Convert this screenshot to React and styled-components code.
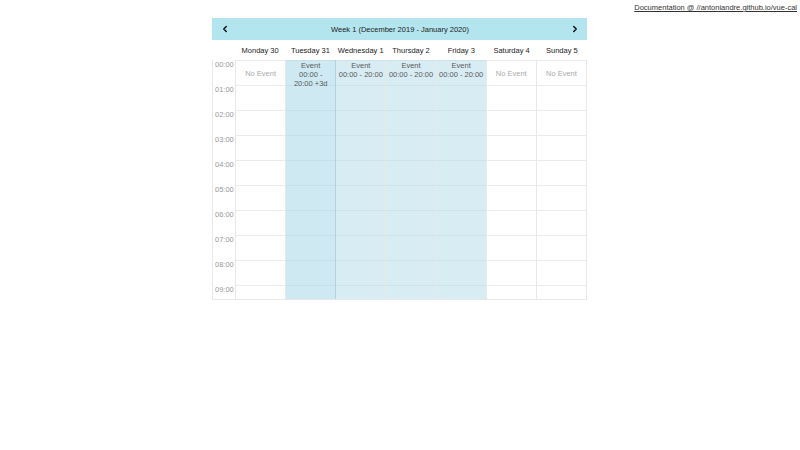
import React from "react";
import styled, { createGlobalStyle } from "styled-components";
import { ChevronLeft, ChevronRight } from "lucide-react";

const GlobalStyle = createGlobalStyle`
  html, body {
    margin: 0;
    padding: 0;
    background: #fff;
    font-family: "Liberation Sans", Arial, sans-serif;
  }
`;

const days = [
  { label: "Monday 30", event: null },
  { label: "Tuesday 31", event: { title: "Event", lines: ["00:00 -", "20:00 +3d"], strong: true } },
  { label: "Wednesday 1", event: { title: "Event", lines: ["00:00 - 20:00"] } },
  { label: "Thursday 2", event: { title: "Event", lines: ["00:00 - 20:00"] } },
  { label: "Friday 3", event: { title: "Event", lines: ["00:00 - 20:00"] } },
  { label: "Saturday 4", event: null },
  { label: "Sunday 5", event: null },
];

const hours = ["00:00", "01:00", "02:00", "03:00", "04:00", "05:00", "06:00", "07:00", "08:00", "09:00"];

const App = () => {
  return (
    <>
      <GlobalStyle />
      <Page>
        <DocLink href="#">Documentation @ //antoniandre.github.io/vue-cal</DocLink>
        <Calendar>
          <TitleBar>
            <ArrowButton type="button">
              <ChevronLeft size={10} strokeWidth={3.5} />
            </ArrowButton>
            <Title>Week 1 (December 2019 - January 2020)</Title>
            <ArrowButton type="button">
              <ChevronRight size={10} strokeWidth={3.5} />
            </ArrowButton>
          </TitleBar>
          <WeekdayRow>
            <TimeSpacer />
            {days.map((d) => (
              <Weekday key={d.label}>{d.label}</Weekday>
            ))}
          </WeekdayRow>
          <Body>
            <TimeColumn>
              {hours.map((h) => (
                <TimeCell key={h}>{h}</TimeCell>
              ))}
            </TimeColumn>
            {days.map((d) => (
              <DayColumn key={d.label}>
                {hours.map((h, i) => (
                  <HourCell key={h}>
                    {i === 0 && !d.event && <NoEvent>No Event</NoEvent>}
                  </HourCell>
                ))}
                {d.event && (
                  <EventBox $strong={d.event.strong}>
                    <div>{d.event.title}</div>
                    {d.event.lines.map((l) => (
                      <div key={l}>{l}</div>
                    ))}
                  </EventBox>
                )}
              </DayColumn>
            ))}
          </Body>
        </Calendar>
      </Page>
    </>
  );
};

const Page = styled.div`
  position: relative;
  width: 800px;
  height: 450px;
  padding-top: 18px;
  box-sizing: border-box;
`;

const DocLink = styled.a`
  position: absolute;
  top: 3px;
  right: 3px;
  font-size: 7.5px;
  color: #333;
  text-decoration: underline;
`;

const Calendar = styled.div`
  width: 375px;
  margin-left: 212px;
  font-size: 7.5px;
  color: #222;
`;

const TitleBar = styled.div`
  height: 22px;
  background: #b2e5ee;
  display: flex;
  align-items: center;
  justify-content: space-between;
  padding: 0 7px 0 8px;
`;

const ArrowButton = styled.button`
  border: none;
  background: none;
  padding: 0;
  display: flex;
  align-items: center;
  color: #111;
  cursor: pointer;
`;

const Title = styled.div`
  color: #222;
`;

const WeekdayRow = styled.div`
  height: 20px;
  display: flex;
  align-items: center;
`;

const TimeSpacer = styled.div`
  width: 23px;
  flex: none;
`;

const Weekday = styled.div`
  flex: 1;
  text-align: center;
  white-space: nowrap;
`;

const Body = styled.div`
  display: flex;
  height: 240px;
  overflow: hidden;
  border: 1px solid #e8e8e8;
  border-top: none;
  box-sizing: border-box;
`;

const TimeColumn = styled.div`
  width: 22px;
  flex: none;
`;

const TimeCell = styled.div`
  height: 25px;
  box-sizing: border-box;
  padding: 0 0 0 2px;
  color: #999;
  line-height: 10px;
`;

const DayColumn = styled.div`
  flex: 1;
  position: relative;
  border-left: 1px solid #e8e8e8;
`;

const HourCell = styled.div`
  height: 25px;
  box-sizing: border-box;
  border-top: 1px solid #ebebeb;
  display: flex;
  align-items: center;
  justify-content: center;
`;

const NoEvent = styled.span`
  color: #aaa;
`;

const EventBox = styled.div`
  position: absolute;
  top: 0;
  left: 0;
  right: ${(p) => (p.$strong ? "-1px" : "0")};
  height: 500px;
  background: ${(p) => (p.$strong ? "rgba(165, 215, 232, 0.55)" : "rgba(180, 218, 232, 0.52)")};
  border-right: ${(p) => (p.$strong ? "1px solid rgba(150, 200, 215, 0.45)" : "none")};
  z-index: 1;
  color: #5a5a5a;
  text-align: center;
  line-height: 9px;
  padding-top: 1px;
  white-space: nowrap;
`;

export default App;
